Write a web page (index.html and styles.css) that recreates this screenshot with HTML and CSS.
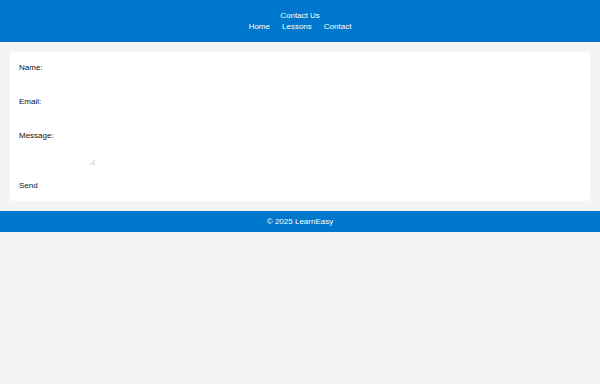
FILE: index.html
```html
<!DOCTYPE html>
<html lang="en">
<head>
<meta charset="utf-8">
<title>Contact Us</title>
<link rel="stylesheet" href="styles.css">
</head>
<body>
<header class="site-header">
  <h1 class="title">Contact Us</h1>
  <nav class="nav">
    <a href="#">Home</a>
    <a href="#">Lessons</a>
    <a href="#">Contact</a>
  </nav>
</header>
<main class="main">
  <form class="card">
    <label class="label" for="name">Name:</label>
    <input class="field" id="name" type="text">
    <label class="label" for="email">Email:</label>
    <input class="field" id="email" type="email">
    <label class="label" for="msg">Message:</label>
    <textarea class="area" id="msg"></textarea>
    <button class="send" type="submit">Send</button>
  </form>
</main>
<footer class="site-footer">© 2025 LearnEasy</footer>
</body>
</html>
```
FILE: styles.css
```css
* { box-sizing: border-box; }
html, body { margin: 0; padding: 0; }
body {
  background: #f4f4f4;
  font-family: "Liberation Sans", Arial, sans-serif;
  font-size: 8px;
  color: #111;
}
.site-header {
  background: #0077cc;
  color: #fff;
  height: 42px;
  padding-top: 11px;
  text-align: center;
}
.title {
  margin: 0;
  font-size: 8px;
  font-weight: normal;
  line-height: 10px;
}
.nav {
  display: flex;
  justify-content: center;
  gap: 12px;
  line-height: 12px;
}
.nav a { color: #fff; text-decoration: none; }
.main { padding: 10px; }
.card {
  background: #fff;
  border-radius: 3px;
  padding: 11px 9px 10px;
  display: flex;
  flex-direction: column;
  align-items: flex-start;
}
.label { display: block; line-height: 10px; }
.field {
  border: none;
  background: transparent;
  height: 14px;
  margin: 5px 0;
  padding: 0;
  outline: none;
}
.area {
  border: none;
  background: transparent;
  width: 77px;
  height: 25px;
  margin: 0 0 15px;
  padding: 0;
  outline: none;
}
.area::-webkit-resizer {
  background: linear-gradient(135deg, transparent 0 45%, #c4c4c4 45% 58%, transparent 58% 72%, #c4c4c4 72% 85%, transparent 85%) no-repeat right 1px bottom 1px / 5px 5px;
}
.send {
  border: none;
  background: transparent;
  padding: 0;
  font: inherit;
  color: #111;
  line-height: 10px;
}
.site-footer {
  background: #0077cc;
  color: #fff;
  text-align: center;
  height: 21px;
  line-height: 21px;
}
```
